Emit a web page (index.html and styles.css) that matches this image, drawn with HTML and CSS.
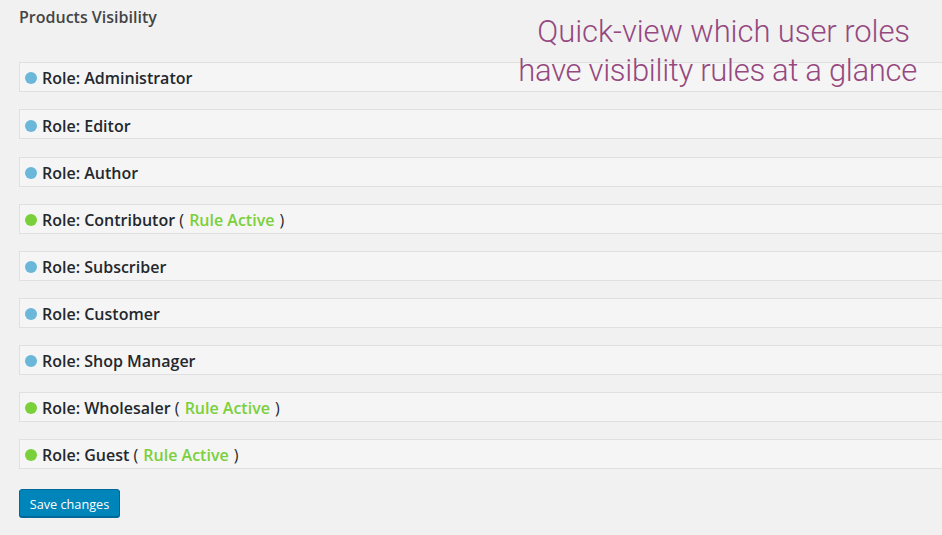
FILE: index.html
```html
<!DOCTYPE html>
<html lang="en">
<head>
<meta charset="utf-8">
<title>Products Visibility</title>
<link rel="stylesheet" href="styles.css">
</head>
<body>
<main class="page">
  <h2 class="title">Products Visibility</h2>
  <div class="roles">
    <div class="role"><span class="dot"></span><span class="label">Role: Administrator</span></div>
    <div class="role low"><span class="dot"></span><span class="label">Role: Editor</span></div>
    <div class="role shifted"><span class="dot"></span><span class="label">Role: Author</span></div>
    <div class="role"><span class="dot on"></span><span class="label">Role: Contributor <span class="paren">(</span> <span class="active">Rule Active</span> <span class="paren">)</span></span></div>
    <div class="role"><span class="dot"></span><span class="label">Role: Subscriber</span></div>
    <div class="role"><span class="dot"></span><span class="label">Role: Customer</span></div>
    <div class="role"><span class="dot"></span><span class="label">Role: Shop Manager</span></div>
    <div class="role"><span class="dot on"></span><span class="label">Role: Wholesaler <span class="paren">(</span> <span class="active">Rule Active</span> <span class="paren">)</span></span></div>
    <div class="role"><span class="dot on"></span><span class="label">Role: Guest <span class="paren">(</span> <span class="active">Rule Active</span> <span class="paren">)</span></span></div>
  </div>
  <button class="save" type="button">Save changes</button>
</main>
<p class="note"><span class="note-first">Quick-view which user roles</span><span class="note-second">have visibility rules at a glance</span></p>
</body>
</html>
```
FILE: styles.css
```css
html, body {
  margin: 0;
  height: 535px;
  overflow: hidden;
  background: #f1f1f1;
}
body {
  position: relative;
  font-family: "Open Sans", "Noto Sans", sans-serif;
}
.page {
  padding: 7px 0 0 19px;
}
.title {
  margin: 0 0 34px;
  font-size: 16px;
  line-height: 21px;
  font-weight: 600;
  color: #444;
}
.roles {
  display: flex;
  flex-direction: column;
  gap: 17px;
}
.role {
  display: flex;
  align-items: center;
  gap: 5px;
  height: 28px;
  padding-left: 5px;
  border: 1px solid #e0e0e0;
  border-right: 0;
  background: #f5f5f5;
  font-size: 16px;
  font-weight: 600;
  color: #23282d;
  white-space: pre-wrap;
}
.label {
  padding-top: 2px;
}
.low {
  height: 26px;
  padding-top: 2px;
}
.shifted {
  margin-top: 1px;
}
.dot {
  flex: none;
  width: 12px;
  height: 12px;
  margin-top: 1px;
  border-radius: 50%;
  background: #6ab7da;
}
.dot.on {
  background: #7ad03a;
}
.active {
  margin: 0 1px 0 1px;
  color: #7ad03a;
}
.paren {
  font-weight: 400;
}
.save {
  display: block;
  margin-top: 20px;
  width: 101px;
  height: 28px;
  padding: 2px 0 0;
  border: 1px solid #006799;
  border-radius: 3px;
  background: #0085ba;
  box-shadow: 0 1px 0 #006799;
  color: #fff;
  font-family: inherit;
  font-size: 12.7px;
}
.note {
  position: absolute;
  top: 12px;
  right: 25px;
  margin: 0;
  font-family: "Roboto", sans-serif;
  font-weight: 300;
  font-size: 31px;
  line-height: 39px;
  text-align: right;
  color: #95497f;
}
.note-first,
.note-second {
  display: block;
}
.note-first {
  margin-right: 7px;
  letter-spacing: -0.08px;
}
.note-second {
  letter-spacing: -0.3px;
}
```
